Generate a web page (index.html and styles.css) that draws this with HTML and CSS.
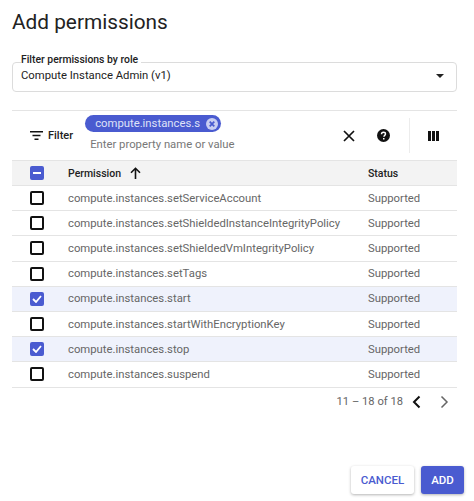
FILE: index.html
```html
<!DOCTYPE html>
<html lang="en">
<head>
    <meta charset="UTF-8">
    <title>Add permissions</title>
    <link rel="stylesheet" href="styles.css">
</head>
<body>
    <div class="dialog">
        <h1>Add permissions</h1>

        <fieldset class="role-select">
            <legend>Filter permissions by role</legend>
            <div class="role-value">
                <span>Compute Instance Admin (v1)</span>
                <span class="caret"></span>
            </div>
        </fieldset>

        <div class="toolbar">
            <svg class="filter-icon" width="13" height="9" viewBox="0 0 13 9"><path d="M0 0h13v1.500H0zM2.500 3.700h8v1.500h-8zM4.500 7.400h4V9h-4z"/></svg>
            <span class="filter-label">Filter</span>
            <div class="filter-input">
                <span class="chip">compute.instances.s
                    <svg width="12" height="12" viewBox="0 0 13 13"><circle cx="6.500" cy="6.500" r="6.500" fill="#c9cef2"/><path d="M4 4l5 5M9 4l-5 5" stroke="#4a5bd0" stroke-width="1.900"/></svg>
                </span>
                <span class="placeholder">Enter property name or value</span>
            </div>
            <svg class="clear-icon" width="12" height="12" viewBox="0 0 12 12"><path d="M1 1l10 10M11 1L1 11" stroke="#111" stroke-width="1.700"/></svg>
            <svg class="help-icon" width="13" height="13" viewBox="0 0 13 13"><circle cx="6.500" cy="6.500" r="6.500" fill="#111"/><path d="M4.500 5.200c0-1.200.9-1.900 2-1.900s2 .7 2 1.700c0 1.300-1.600 1.400-1.600 2.700" fill="none" stroke="#fff" stroke-width="1.400"/><rect x="6" y="9" width="1.500" height="1.500" fill="#fff"/></svg>
            <div class="toolbar-divider"></div>
            <svg class="columns-icon" width="11" height="10" viewBox="0 0 11 10"><path d="M0 0h3v10H0zM4 0h3v10H4zM8 0h3v10H8z" fill="#111"/></svg>
        </div>

        <table>
            <thead>
                <tr>
                    <th class="check-col"><span class="box checked"><span class="dash"></span></span></th>
                    <th>Permission <svg class="sort-icon" width="11" height="12" viewBox="0 0 11 12"><path d="M5.500 12V1.500M1 5.800l4.500-4.500L10 5.800" fill="none" stroke="#111" stroke-width="1.600"/></svg></th>
                    <th class="status-col">Status</th>
                </tr>
            </thead>
            <tbody id="rows"></tbody>
        </table>

        <div class="pagination">
            <span>11 – 18 of 18</span>
            <svg width="9" height="14" viewBox="0 0 9 14"><path d="M7.500 1.500L2 7l5.500 5.500" fill="none" stroke="#111" stroke-width="2"/></svg>
            <svg class="next" width="9" height="14" viewBox="0 0 9 14"><path d="M1.500 1.500L7 7l-5.500 5.500" fill="none" stroke="#666" stroke-width="1.500"/></svg>
        </div>

        <div class="actions">
            <button class="btn-cancel">CANCEL</button>
            <button class="btn-add">ADD</button>
        </div>
    </div>

    <script>
        const permissoes = [
            { nome: 'compute.instances.setServiceAccount' },
            { nome: 'compute.instances.setShieldedInstanceIntegrityPolicy' },
            { nome: 'compute.instances.setShieldedVmIntegrityPolicy' },
            { nome: 'compute.instances.setTags' },
            { nome: 'compute.instances.start', marcado: true },
            { nome: 'compute.instances.startWithEncryptionKey' },
            { nome: 'compute.instances.stop', marcado: true },
            { nome: 'compute.instances.suspend' }
        ];

        const check = '<svg width="10" height="8" viewBox="0 0 10 8"><path d="M1 4l3 3 5-6" fill="none" stroke="#fff" stroke-width="1.800"/></svg>';

        document.getElementById('rows').innerHTML = permissoes.map(p => `
            <tr class="${p.marcado ? 'selected' : ''}">
                <td class="check-col"><span class="box ${p.marcado ? 'checked' : ''}">${p.marcado ? check : ''}</span></td>
                <td>${p.nome}</td>
                <td class="status-col">Supported</td>
            </tr>`).join('');
    </script>
</body>
</html>
```

FILE: styles.css
```css
body {
    font-family: 'Roboto', sans-serif;
    background-color: white;
    margin: 0;
    color: #222;
}

.dialog {
    width: 474px;
    height: 501px;
    padding: 0 17px 0 12px;
    box-sizing: border-box;
    display: flex;
    flex-direction: column;
}

h1 {
    font-size: 20.800px;
    font-weight: 400;
    line-height: 24px;
    margin: 10px 0 0 0;
}

.role-select {
    margin: 20px 0 0 0;
    padding: 0 8px;
    height: 38px;
    box-sizing: border-box;
    border: 1px solid #dcdcdc;
    border-radius: 4px;
}

.role-select legend {
    font-size: 10.400px;
    font-weight: 500;
    line-height: 12px;
    padding: 0 3px 4px 0;
}

.role-value {
    display: flex;
    justify-content: space-between;
    align-items: center;
    font-size: 11.300px;
    line-height: 16px;
    margin-top: -2px;
}

.caret {
    width: 0;
    height: 0;
    border-left: 4px solid transparent;
    border-right: 4px solid transparent;
    border-top: 4.500px solid #222;
    margin-right: 4px;
}

.toolbar {
    display: flex;
    align-items: center;
    height: 50px;
    margin-top: 18px;
    border-top: 1px solid #e4e4e4;
    box-sizing: border-box;
}

.filter-icon {
    margin-left: 18px;
    fill: #111;
}

.filter-label {
    font-size: 11px;
    font-weight: 500;
    margin-left: 5px;
}

.filter-input {
    display: flex;
    flex-direction: column;
    flex: 1;
    margin-left: 12px;
    padding-bottom: 4px;
    gap: 5px;
    align-items: flex-start;
}

.chip {
    display: flex;
    align-items: center;
    gap: 6px;
    background-color: #4a5bd0;
    color: #dfe2f8;
    font-size: 11.300px;
    line-height: 17px;
    border-radius: 9px;
    padding: 0 3px 0 10px;
}

.placeholder {
    font-size: 11.300px;
    line-height: 15px;
    color: #777;
    margin-left: 5px;
}

.clear-icon {
    margin-right: 22px;
}

.help-icon {
    margin-right: 19px;
}

.toolbar-divider {
    width: 1px;
    height: 35px;
    background-color: #ececec;
    margin-right: 18px;
}

.columns-icon {
    margin-right: 18px;
}

table {
    border-collapse: collapse;
    width: 100%;
    font-size: 11.300px;
}

th {
    background-color: #f3f3f3;
    font-weight: 500;
    font-size: 10.500px;
    text-align: left;
    height: 24px;
    padding: 0;
    border-top: 1px solid #e4e4e4;
    border-bottom: 1px solid #e4e4e4;
}

td {
    height: 24.200px;
    padding: 0;
    color: #666;
    border-bottom: 1px solid #e4e4e4;
}

.selected td {
    background-color: #eff2fc;
}

.check-col {
    width: 56px;
    padding-left: 18px;
    box-sizing: border-box;
}

.status-col {
    width: 89px;
}

.box {
    display: flex;
    align-items: center;
    justify-content: center;
    width: 14px;
    height: 14px;
    box-sizing: border-box;
    border: 2px solid #111;
    border-radius: 2px;
}

.box.checked {
    background-color: #4a5bd0;
    border-color: #4a5bd0;
}

.dash {
    width: 8px;
    height: 2px;
    background-color: white;
}

.sort-icon {
    vertical-align: -2px;
    margin-left: 6px;
}

.pagination {
    display: flex;
    justify-content: flex-end;
    align-items: center;
    font-size: 11.200px;
    color: #666;
    height: 28px;
    padding-right: 8px;
}

.pagination svg {
    margin-left: 9px;
}

.pagination .next {
    margin-left: 19px;
}

.actions {
    display: flex;
    justify-content: flex-end;
    gap: 7px;
    margin-top: 50px;
    margin-right: -7px;
}

button {
    font-family: 'Roboto', sans-serif;
    font-size: 11.500px;
    font-weight: 500;
    height: 28px;
    padding: 0;
    border: none;
    border-radius: 3px;
    box-shadow: 0 1px 3px rgba(0, 0, 0, 0.3);
}

.btn-cancel {
    width: 63px;
    background-color: white;
    color: #4a5bd0;
}

.btn-add {
    width: 43px;
    background-color: #4a5bd0;
    color: white;
}
```
